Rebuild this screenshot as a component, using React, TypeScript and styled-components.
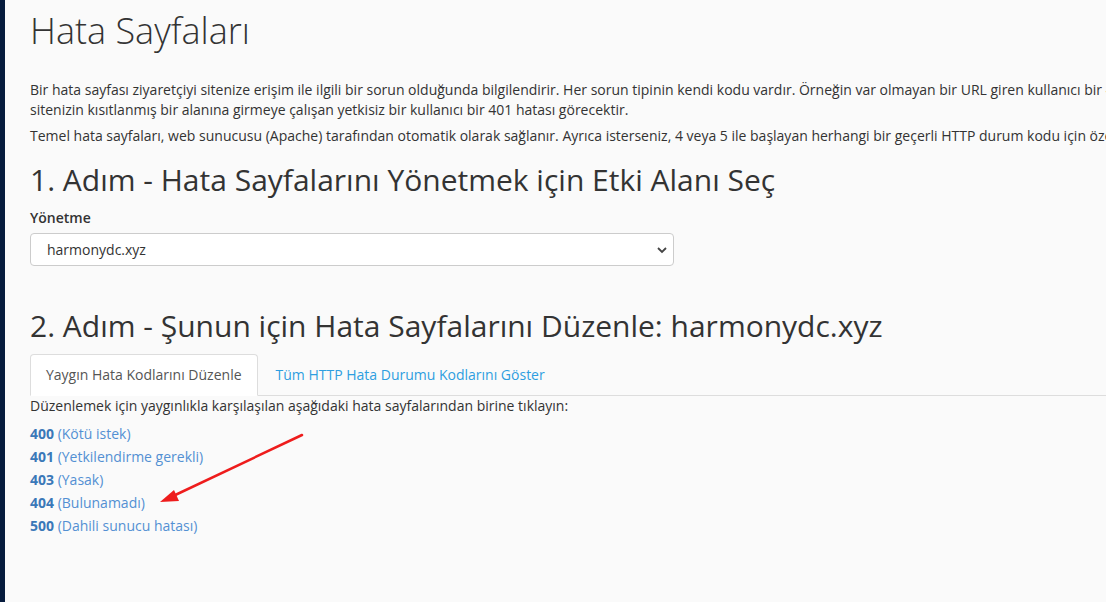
import React from "react";
import styled, { createGlobalStyle } from "styled-components";

const Global = createGlobalStyle`
  html, body { margin: 0; padding: 0; background: #fafafa; overflow: hidden; }
  body { font-family: "Open Sans", "Noto Sans", sans-serif; color: #333; }
  * { box-sizing: border-box; }
`;

const Page = styled.div`
  display: flex;
  width: 1106px;
  height: 602px;
  overflow: hidden;
  background: #fafafa;
`;

const Strip = styled.div`
  flex: 0 0 5px;
  background: #061b3d;
`;

const Main = styled.main`
  position: relative;
  flex: 0 0 1500px;
  padding: 11px 0 0 25px;
`;

const Title = styled.h1`
  margin: 0;
  font-size: 36px;
  font-weight: 300;
  line-height: 40px;
  color: #333;
`;

const Para = styled.p<{ $mt?: number }>`
  margin: ${(p) => p.$mt ?? 0}px 0 0;
  font-size: 14px;
  line-height: 20px;
  white-space: nowrap;
`;

const StepHeading = styled.h2<{ $mt: number }>`
  margin: ${(p) => p.$mt}px 0 0;
  font-size: 30px;
  font-weight: 400;
  line-height: 34px;
  color: #333;
`;

const Label = styled.label`
  display: block;
  margin-top: 11px;
  font-size: 14px;
  font-weight: 600;
  line-height: 20px;
`;

const SelectBox = styled.div`
  margin-top: 5px;
  width: 644px;
  height: 33px;
  display: flex;
  align-items: center;
  justify-content: space-between;
  padding: 0 5px 0 16px;
  border: 1px solid #ccc;
  border-radius: 4px;
  background: #fff;
  font-size: 14px;
  color: #333;
`;

const Tabs = styled.div`
  margin-top: 11px;
  display: flex;
  border-bottom: 1px solid #ddd;
`;

const Tab = styled.div<{ $active?: boolean }>`
  padding: 10px 15px;
  margin-right: 2px;
  font-size: 14px;
  line-height: 20px;
  border: 1px solid ${(p) => (p.$active ? "#ddd" : "transparent")};
  border-bottom-color: ${(p) => (p.$active ? "#fff" : "transparent")};
  border-radius: 4px 4px 0 0;
  background: ${(p) => (p.$active ? "#fff" : "transparent")};
  color: ${(p) => (p.$active ? "#555" : "#2e9ee0")};
  margin-bottom: -1px;
`;

const CodeList = styled.ul`
  list-style: none;
  margin: 6px 0 0;
  padding: 0;
`;

const CodeItem = styled.li`
  font-size: 14px;
  line-height: 23px;
  color: #5390d3;
`;

const Code = styled.span`
  font-weight: 700;
  color: #3a78b8;
`;

const Arrow = styled.svg`
  position: absolute;
  left: 0;
  top: 0;
  pointer-events: none;
`;

const codes: [string, string][] = [
  ["400", "Kötü istek"],
  ["401", "Yetkilendirme gerekli"],
  ["403", "Yasak"],
  ["404", "Bulunamadı"],
  ["500", "Dahili sunucu hatası"],
];

export default function App() {
  return (
    <>
      <Global />
      <Page>
        <Strip />
        <Main>
          <Title>Hata Sayfaları</Title>
          <Para $mt={29}>
            Bir hata sayfası ziyaretçiyi sitenize erişim ile ilgili bir sorun olduğunda bilgilendirir. Her sorun tipinin kendi kodu vardır. Örneğin var olmayan bir URL giren kullanıcı bir 404 hatası görürken,
            <br />
            sitenizin kısıtlanmış bir alanına girmeye çalışan yetkisiz bir kullanıcı bir 401 hatası görecektir.
          </Para>
          <Para $mt={6}>
            Temel hata sayfaları, web sunucusu (Apache) tarafından otomatik olarak sağlanır. Ayrıca isterseniz, 4 veya 5 ile başlayan herhangi bir geçerli HTTP durum kodu için özel hata sayfaları oluşturabilirsiniz.
          </Para>
          <StepHeading $mt={17}>1. Adım - Hata Sayfalarını Yönetmek için Etki Alanı Seç</StepHeading>
          <Label>Yönetme</Label>
          <SelectBox>
            <span>harmonydc.xyz</span>
            <svg width="12" height="8" viewBox="0 0 12 8">
              <path d="M2 2 L6 6 L10 2" fill="none" stroke="#444" strokeWidth="1.8" />
            </svg>
          </SelectBox>
          <StepHeading $mt={43}>2. Adım - Şunun için Hata Sayfalarını Düzenle: harmonydc.xyz</StepHeading>
          <Tabs>
            <Tab $active>Yaygın Hata Kodlarını Düzenle</Tab>
            <Tab>Tüm HTTP Hata Durumu Kodlarını Göster</Tab>
          </Tabs>
          <Para>Düzenlemek için yaygınlıkla karşılaşılan aşağıdaki hata sayfalarından birine tıklayın:</Para>
          <CodeList>
            {codes.map(([c, t]) => (
              <CodeItem key={c}>
                <Code>{c}</Code> ({t})
              </CodeItem>
            ))}
          </CodeList>
          <Arrow width="400" height="602" viewBox="0 0 400 602">
            <line x1="297" y1="435" x2="166" y2="497" stroke="#ee1c1c" strokeWidth="2.5" strokeLinecap="round" />
            <polygon points="155,502 169,490 174,501" fill="#ee1c1c" />
          </Arrow>
        </Main>
      </Page>
    </>
  );
}
